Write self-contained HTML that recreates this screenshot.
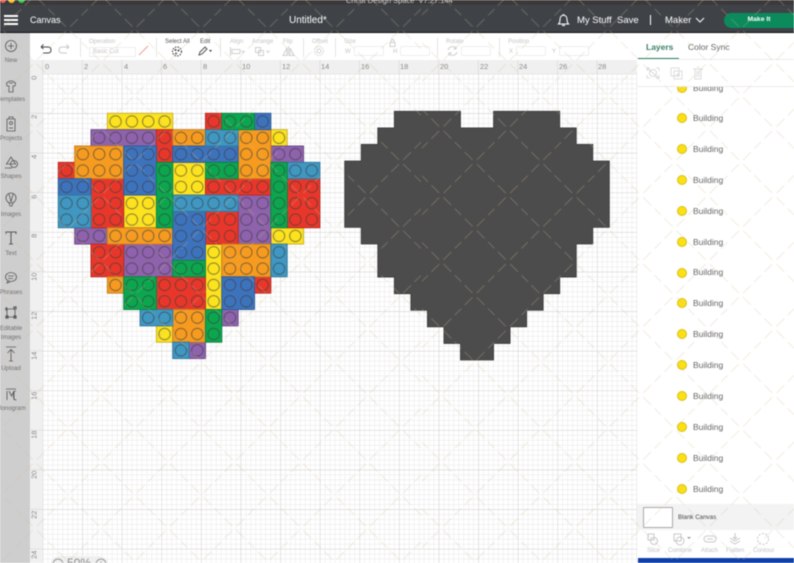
<!DOCTYPE html>
<html><head><meta charset="utf-8"><style>
html,body{margin:0;padding:0;width:794px;height:563px;overflow:hidden;background:#fff}
body{position:relative;font-family:"Liberation Sans",sans-serif}
#w{position:absolute;left:0;top:0;width:794px;height:563px;overflow:hidden;filter:blur(.4px)}
.a{position:absolute;white-space:nowrap;line-height:1}
.sl{position:absolute;left:-9px;width:40px;text-align:center;font-size:6.2px;color:#707070;line-height:1;white-space:nowrap}
.tl{position:absolute;font-size:6px;color:#c4c4c4;line-height:1;white-space:nowrap}
.inp{position:absolute;height:8px;border:1px solid #eee;border-radius:2px;top:46px}
.div{position:absolute;top:38px;width:1px;height:19px;background:#e4e4e4}
.rx{position:absolute;top:63px;font-size:7.5px;color:#8a8a8a;line-height:1}
.ry{position:absolute;left:28px;width:12px;text-align:center;font-size:7.5px;color:#8a8a8a;line-height:1;transform:rotate(-90deg)}
.row{position:absolute;left:677px;width:10px;height:10px;border-radius:50%;background:#fbe013;border:.5px solid #d9bf18;box-sizing:border-box}
.rt{position:absolute;left:693px;font-size:8.5px;color:#666;line-height:1}
.bt{position:absolute;top:548px;font-size:6px;color:#c2c2c2;line-height:1;white-space:nowrap}
svg{position:absolute;overflow:visible}
</style></head><body><div id="w">

<!-- title bar -->
<div class="a" style="left:0;top:0;width:794px;height:5px;background:#3b393a"></div>
<div class="a" style="left:0;top:-3px;width:6px;height:6px;border-radius:50%;background:#ee5f57"></div>
<div class="a" style="left:8px;top:-4px;width:7px;height:7px;border-radius:50%;background:#f6bd2e"></div>
<div class="a" style="left:18px;top:-4px;width:7px;height:7px;border-radius:50%;background:#3fc74b"></div>
<div class="a" style="left:346px;top:-3px;font-size:7.5px;color:#cfcfcf">Cricut Design Space&nbsp; V7.27.144</div>

<!-- header -->
<div class="a" style="left:0;top:5px;width:794px;height:27px;background:#3f4348"></div>
<div class="a" style="left:0;top:32px;width:794px;height:1px;background:#0c0c0c"></div>
<div class="a" style="left:4px;top:15px;width:14px;height:2px;background:#fff"></div>
<div class="a" style="left:4px;top:19px;width:14px;height:2px;background:#fff"></div>
<div class="a" style="left:4px;top:23px;width:14px;height:2px;background:#fff"></div>
<div class="a" style="left:30px;top:16px;font-size:9px;color:#fff">Canvas</div>
<div class="a" style="left:289px;top:16px;font-size:10px;color:#fff">Untitled*</div>
<svg style="left:557px;top:13px" width="13" height="14" viewBox="0 0 13 14" fill="none" stroke="#fff" stroke-width="1.1"><path d="M1.5 11h10c-1.2-1.2-1.5-2-1.5-4.500C10 4 8.600 2.200 6.500 2.200S3 4 3 6.500C3 9 2.700 9.800 1.500 11zM5 12.400h3M6.500 1v1.200"/></svg>
<div class="a" style="left:577px;top:16px;font-size:9.5px;color:#fff">My Stuff</div>
<div class="a" style="left:617px;top:16px;font-size:9.5px;color:#fff">Save</div>
<div class="a" style="left:650px;top:15px;width:1px;height:10px;background:#fff"></div>
<div class="a" style="left:665px;top:16px;font-size:9.5px;color:#fff">Maker</div>
<svg style="left:695px;top:17px" width="10" height="6" viewBox="0 0 10 6" fill="none" stroke="#fff" stroke-width="1"><path d="M1 1l4 4 4-4"/></svg>
<div class="a" style="left:724px;top:12.500px;width:80px;height:15px;border-radius:8px;background:#0b8a5c"></div>
<div class="a" style="left:724px;top:17px;width:70px;text-align:center;font-size:6.800px;font-weight:bold;color:#fff">Make It</div>

<!-- toolbar -->
<div class="a" style="left:30px;top:33px;width:607px;height:27px;background:#fff"></div>
<svg style="left:39px;top:43px" width="32" height="11" viewBox="0 0 32 11" fill="none" stroke-width="1"><path stroke="#444" d="M2 4h7c2 0 3 1.200 3 3s-1 3-3 3H4M2 4l2.500-2.500M2 4l2.500 2"/><path stroke="#c8c8c8" d="M30 4h-7c-2 0-3 1.200-3 3s1 3 3 3h5M30 4l-2.500-2.500M30 4l-2.500 2"/></svg>
<div class="div" style="left:80px"></div>
<div class="tl" style="left:89px;top:39px">Operation</div>
<div class="a" style="left:89px;top:47px;width:45px;height:8px;border:1px solid #eee"></div>
<div class="tl" style="left:93px;top:49px">Basic Cut</div>
<svg style="left:138px;top:45px" width="12" height="11"><path d="M1 10L10 1" stroke="#f0a79f" stroke-width="1.2"/></svg>
<div class="div" style="left:156px"></div>
<div class="a" style="left:165px;top:39px;font-size:6px;color:#555">Select All</div>
<svg style="left:171px;top:46px" width="12" height="11" fill="none"><circle cx="6" cy="5.500" r="4.500" stroke="#333" stroke-dasharray="1.500 1.200"/><circle cx="4.500" cy="4" r="1" fill="#444"/><circle cx="7.500" cy="4.500" r="1" fill="#444"/><circle cx="5" cy="7.500" r="1" fill="#444"/></svg>
<div class="a" style="left:200px;top:39px;font-size:6px;color:#555">Edit</div>
<svg style="left:197px;top:46px" width="16" height="10" fill="none"><path d="M2 9l1-3 5-5 2 2-5 5z" stroke="#444" stroke-width=".9"/><path d="M12 4h3l-1.500 2z" fill="#333"/></svg>
<div class="div" style="left:220px"></div>
<div class="tl" style="left:230px;top:39px">Align</div>
<svg style="left:230px;top:47px" width="15" height="9" fill="none" stroke="#cfcfcf"><path d="M.5 0v9M2 2.500h8v4H2z"/><path d="M11.500 3.500l1.500 2 1.500-2"/></svg>
<div class="tl" style="left:252px;top:39px">Arrange</div>
<svg style="left:255px;top:47px" width="15" height="9" fill="none" stroke="#cfcfcf"><path d="M.5.500h5v5h-5zM3.500 3.500h5v5h-5z"/><path d="M11.500 3.500l1.500 2 1.500-2"/></svg>
<div class="tl" style="left:283px;top:39px">Flip</div>
<svg style="left:282px;top:46px" width="15" height="10" fill="none" stroke="#cfcfcf"><path d="M6.500 0v10M5 2L1 9.500h4zM8 2l4 7.500H8z"/></svg>
<div class="div" style="left:303px"></div>
<div class="tl" style="left:312px;top:39px">Offset</div>
<svg style="left:314px;top:46px" width="10" height="10" fill="none" stroke="#d2d2d2"><circle cx="5" cy="5" r="2"/><circle cx="5" cy="5" r="4.500" stroke-dasharray="1.500 1"/></svg>
<div class="div" style="left:335px"></div>
<div class="tl" style="left:344px;top:39px">Size</div>
<svg style="left:389px;top:39px" width="7" height="8" fill="none" stroke="#cfcfcf"><path d="M1 3.500h5v4H1zM2 3.500V2c0-2 3-2 3 0v1.500"/></svg>
<div class="tl" style="left:345px;top:49px">W</div><div class="inp" style="left:354px;width:28px"></div>
<div class="tl" style="left:393px;top:49px">H</div><div class="inp" style="left:400px;width:28px"></div>
<div class="div" style="left:437px"></div>
<div class="tl" style="left:446px;top:39px">Rotate</div>
<svg style="left:447px;top:46px" width="11" height="10" fill="none" stroke="#cfcfcf"><path d="M1 4a4.500 4.500 0 0 1 8-1.500M10 6a4.500 4.500 0 0 1-8 1.500M9 .5v2.500H6.500M2 9.500V7h2.500"/></svg>
<div class="inp" style="left:461px;width:28px"></div>
<div class="div" style="left:499px"></div>
<div class="tl" style="left:508px;top:39px">Position</div>
<div class="tl" style="left:509px;top:49px">X</div><div class="inp" style="left:516px;width:28px"></div>
<div class="tl" style="left:552px;top:49px">Y</div><div class="inp" style="left:559px;width:28px"></div>

<!-- left sidebar -->
<div class="a" style="left:0;top:33px;width:30px;height:530px;background:#cecece"></div>
<svg style="left:0;top:33px" width="30" height="400" fill="none" stroke="#5a5a5a" stroke-width=".85">
<circle cx="11" cy="13" r="5.500"/><path d="M11 10v6M8 13h6"/>
<path d="M6.500 50l3-2h3l3 2-.5 3h-2v6H9v-6H7z"/><path d="M9 50h4"/>
<path d="M7 86h8v12H7zM9 86v-2h4v2"/><circle cx="11" cy="90" r="1.500"/><path d="M9 95h4"/>
<path d="M11 124l4.500 7h-9z"/><circle cx="14" cy="131" r="3.500"/><path d="M5 135h7"/>
<circle cx="11" cy="165" r="5"/><path d="M9 170l1 3h2l1-3M9 161l2 8 2-8"/>
<path d="M6 201v-2h10v2M11 199v12M9 211h4" stroke-width="1.100"/>
<ellipse cx="11" cy="244" rx="5.500" ry="4.500"/><path d="M8 243h6M8 245.500h5M8 248l-1 2 3-1"/>
<path d="M7 276h8v8H7z"/><path d="M5 276h3M6.500 274v4M14 274h2v2h-2zM6 283h2v2H6zM14 283h2v2h-2z" stroke-width="1.200"/>
<path d="M6 314h10M11 328v-11M7.500 320l3.500-3.500 3.500 3.500M9 328h4"/>
<path d="M6 356h10M7 358v9M9 358l2.500 5 2.500-5v9M16 358c-2 0-2.500 1-2.500 3v3c0 2 1 3 3 3"/>
</svg>
<div class="sl" style="top:58px">New</div>
<div class="sl" style="top:97px">Templates</div>
<div class="sl" style="top:136px">Projects</div>
<div class="sl" style="top:174px">Shapes</div>
<div class="sl" style="top:212px">Images</div>
<div class="sl" style="top:251px">Text</div>
<div class="sl" style="top:290px">Phrases</div>
<div class="sl" style="top:326px">Editable</div>
<div class="sl" style="top:335px">Images</div>
<div class="sl" style="top:366px">Upload</div>
<div class="sl" style="top:406px">Monogram</div>

<!-- canvas and grid -->
<svg style="left:30px;top:60px" width="607" height="503" viewBox="30 60 607 503">
<defs>
<pattern id="gm" x="42.7" y="73.7" width="4.95" height="4.95" patternUnits="userSpaceOnUse"><path d="M0 0H4.950M0 0V4.950" stroke="#e6e6e6" stroke-width=".9" fill="none"/></pattern>
<pattern id="gM" x="42.7" y="73.7" width="39.6" height="39.6" patternUnits="userSpaceOnUse"><path d="M0 0H39.600M0 0V39.600" stroke="#d2d2d2" stroke-width="1" fill="none"/></pattern>
<pattern id="st" x="0" y="0" width="1" height="1" patternUnits="userSpaceOnUse"><circle cx=".5" cy=".5" r=".35" fill="none" stroke="#3a3a3a" stroke-opacity=".62" stroke-width=".06"/></pattern>
<polygon id="hp" points="3,0 7,0 7,1 9,1 9,0 13,0 13,1 14,1 14,2 15,2 15,3 16,3 16,7 15,7 15,8 14,8 14,10 13,10 13,11 12,11 12,12 11,12 11,13 10,13 10,14 9,14 9,15 7,15 7,14 6,14 6,13 5,13 5,12 4,12 4,11 3,11 3,10 2,10 2,8 1,8 1,7 0,7 0,3 1,3 1,2 2,2 2,1 3,1"/>
</defs>
<rect x="30" y="60" width="607" height="503" fill="#f0f0f0"/>
<rect x="42.700" y="73.700" width="594.300" height="489.300" fill="#fff"/>
<rect x="42.700" y="73.700" width="594.300" height="489.300" fill="url(#gm)"/>
<rect x="42.700" y="73.700" width="594.300" height="489.300" fill="url(#gM)"/>
<path d="M82.300 60v14M121.900 60v14M161.500 60v14M201.100 60v14M240.700 60v14M280.300 60v14M319.900 60v14M359.500 60v14M399.100 60v14M438.700 60v14M478.300 60v14M517.900 60v14M557.500 60v14M597.100 60v14M42.700 60v14M30 113.300h13M30 152.900h13M30 192.500h13M30 232.100h13M30 271.700h13M30 311.300h13M30 350.900h13M30 390.500h13M30 430.100h13M30 469.700h13M30 509.300h13M30 548.900h13" stroke="#dcdcdc" stroke-width=".8" fill="none"/>

<g transform="translate(58.3 113.3) scale(16.35)" stroke-width=".06">
<g fill="#fde31e" stroke="#c9b22a"><rect x="3" y="0" width="4" height="1"/><rect x="13" y="1" width="1" height="1"/><rect x="7" y="3" width="2" height="2"/><rect x="4" y="5" width="2" height="2"/><rect x="13" y="7" width="2" height="1"/><rect x="9" y="8" width="1" height="4"/><rect x="6" y="13" width="1" height="1"/></g>
<g fill="#8e62ac" stroke="#6f4d8a"><rect x="2" y="1" width="4" height="1"/><rect x="13" y="2" width="2" height="1"/><rect x="11" y="5" width="2" height="3"/><rect x="1" y="7" width="2" height="1"/><rect x="4" y="8" width="3" height="2"/><rect x="10" y="12" width="1" height="1"/><rect x="8" y="14" width="1" height="1"/></g>
<g fill="#e8372a" stroke="#b52c24"><rect x="6" y="1" width="1" height="2"/><rect x="9" y="0" width="1" height="1"/><rect x="0" y="3" width="1" height="1"/><rect x="9" y="4" width="4" height="1"/><rect x="2" y="4" width="2" height="3"/><rect x="14" y="4" width="2" height="3"/><rect x="9" y="6" width="2" height="2"/><rect x="2" y="8" width="2" height="2"/><rect x="6" y="10" width="3" height="2"/><rect x="12" y="10" width="1" height="1"/></g>
<g fill="#f69b1f" stroke="#c57e22"><rect x="7" y="1" width="2" height="1"/><rect x="11" y="1" width="2" height="3"/><rect x="1" y="2" width="3" height="2"/><rect x="3" y="7" width="4" height="1"/><rect x="10" y="8" width="3" height="2"/><rect x="3" y="10" width="1" height="1"/><rect x="7" y="12" width="2" height="2"/></g>
<g fill="#3d73bd" stroke="#2f5b97"><rect x="12" y="0" width="1" height="1"/><rect x="7" y="2" width="4" height="1"/><rect x="4" y="2" width="2" height="3"/><rect x="0" y="4" width="2" height="1"/><rect x="7" y="6" width="2" height="3"/><rect x="10" y="10" width="2" height="2"/></g>
<g fill="#3f97c2" stroke="#32799b"><rect x="9" y="1" width="2" height="1"/><rect x="14" y="3" width="2" height="1"/><rect x="0" y="5" width="2" height="2"/><rect x="7" y="5" width="4" height="1"/><rect x="13" y="8" width="1" height="2"/><rect x="5" y="12" width="2" height="1"/><rect x="7" y="14" width="1" height="1"/></g>
<g fill="#0ca64f" stroke="#0f8443"><rect x="10" y="0" width="2" height="1"/><rect x="6" y="3" width="1" height="4"/><rect x="9" y="3" width="2" height="1"/><rect x="13" y="3" width="1" height="4"/><rect x="7" y="9" width="2" height="1"/><rect x="4" y="10" width="2" height="2"/><rect x="9" y="12" width="1" height="2"/></g>
<use href="#hp" fill="url(#st)"/>
</g>

<g transform="translate(344.7 111.3) scale(16.54 16.58)">
<use href="#hp" fill="#4c4c4c" stroke="#3a3a3a" stroke-width=".05"/>
</g>
</svg>

<div class="rx" style="left:45px">0</div><div class="rx" style="left:84px">2</div><div class="rx" style="left:124px">4</div><div class="rx" style="left:163px">6</div><div class="rx" style="left:203px">8</div><div class="rx" style="left:242px">10</div><div class="rx" style="left:282px">12</div><div class="rx" style="left:321px">14</div><div class="rx" style="left:361px">16</div><div class="rx" style="left:400px">18</div><div class="rx" style="left:440px">20</div><div class="rx" style="left:480px">22</div><div class="rx" style="left:519px">24</div><div class="rx" style="left:559px">26</div><div class="rx" style="left:598px">28</div>
<div class="ry" style="top:74px">0</div><div class="ry" style="top:113px">2</div><div class="ry" style="top:153px">4</div><div class="ry" style="top:193px">6</div><div class="ry" style="top:232px">8</div><div class="ry" style="top:273px">10</div><div class="ry" style="top:312px">12</div><div class="ry" style="top:352px">14</div><div class="ry" style="top:392px">16</div><div class="ry" style="top:431px">18</div><div class="ry" style="top:471px">20</div><div class="ry" style="top:511px">22</div><div class="ry" style="top:551px">24</div>

<!-- zoom control -->
<div class="a" style="left:50px;top:556px;width:59px;height:20px;border-radius:10px;background:#efefef"></div>
<svg style="left:51px;top:557px" width="58" height="14" fill="none" stroke="#9a9a9a"><circle cx="7" cy="7" r="5"/><path d="M4.500 7h5"/><circle cx="50" cy="7" r="5"/><path d="M47.500 7h5M50 4.500v5"/></svg>
<div class="a" style="left:67px;top:557px;font-size:12px;color:#8a8a8a">50%</div>

<!-- right panel -->
<div class="a" style="left:637px;top:33px;width:157px;height:530px;background:#fff"></div>
<div class="a" style="left:646px;top:43px;font-size:8.500px;font-weight:bold;color:#3b8068">Layers</div>
<div class="a" style="left:688px;top:43px;font-size:8.500px;color:#666">Color Sync</div>
<div class="a" style="left:638px;top:58px;width:41px;height:1px;background:#1f7a58"></div>
<div class="a" style="left:679px;top:59px;width:115px;height:1px;background:#ececec"></div>
<svg style="left:645px;top:66px" width="64" height="14" fill="none" stroke="#dcdcdc"><circle cx="8" cy="7" r="3.500"/><path d="M2 2l12 10M2 5V2h3M11 2h3v3M2 9v3h3M11 12h3V9"/><path d="M26 2h8v8h-8zM29 5h8v8h-8zM33 7v4M31 9h4"/><path d="M48 3h10M50 3v10h6V3M52 1h2M52 5v6M54 5v6"/></svg>
<div class="a" style="left:637px;top:86px;width:157px;height:1px;background:#ececec"></div>
<div style="position:absolute;left:637px;top:87px;width:157px;height:416px;overflow:hidden">
<div class="row" style="left:40px;top:-4px"></div><div class="rt" style="left:56px;top:-3px">Building</div>
</div>
<div class="row" style="top:113px"></div><div class="rt" style="top:114px">Building</div>
<div class="row" style="top:144px"></div><div class="rt" style="top:145px">Building</div>
<div class="row" style="top:175px"></div><div class="rt" style="top:176px">Building</div>
<div class="row" style="top:206px"></div><div class="rt" style="top:207px">Building</div>
<div class="row" style="top:237px"></div><div class="rt" style="top:238px">Building</div>
<div class="row" style="top:268px"></div><div class="rt" style="top:268px">Building</div>
<div class="row" style="top:298px"></div><div class="rt" style="top:299px">Building</div>
<div class="row" style="top:329px"></div><div class="rt" style="top:330px">Building</div>
<div class="row" style="top:360px"></div><div class="rt" style="top:361px">Building</div>
<div class="row" style="top:391px"></div><div class="rt" style="top:392px">Building</div>
<div class="row" style="top:422px"></div><div class="rt" style="top:423px">Building</div>
<div class="row" style="top:453px"></div><div class="rt" style="top:454px">Building</div>
<div class="row" style="top:484px"></div><div class="rt" style="top:485px">Building</div>

<div class="a" style="left:637px;top:504px;width:157px;height:26px;background:#f3f3f3"></div>
<div class="a" style="left:643px;top:507px;width:28px;height:19px;background:#fff;border:1px solid #a8a8a8;border-radius:1px"></div>
<div class="a" style="left:678px;top:515px;font-size:6.200px;color:#444">Blank Canvas</div>
<svg style="left:645px;top:532px" width="130" height="14" fill="none" stroke="#c8c8c8"><path d="M3 2h6v6H3z"/><circle cx="9" cy="9" r="3.500"/><path d="M29 2h7v7h-7z"/><circle cx="35" cy="9" r="4"/><path d="M42 5h4l-2 2z" fill="#999" stroke="none"/><rect x="59" y="4" width="12" height="6" rx="3"/><path d="M62 7h6"/><path d="M90 1v6M88 5l2 2 2-2M85 6l5 3 5-3M85 9l5 3 5-3"/><circle cx="118" cy="7" r="5.500" stroke-dasharray="2 1.500"/></svg>
<div class="bt" style="left:647px">Slice</div>
<div class="bt" style="left:668px">Combine</div>
<div class="bt" style="left:701px">Attach</div>
<div class="bt" style="left:726px">Flatten</div>
<div class="bt" style="left:753px">Contour</div>
<div class="a" style="left:638px;top:558px;width:156px;height:5px;background:#0f3fa8"></div>

<!-- watermark overlay -->
<svg style="left:0;top:0;pointer-events:none" width="794" height="563">
<defs>
<pattern id="wa" patternUnits="userSpaceOnUse" width="66.6" height="66.6" patternTransform="translate(34.8 62.1)"><path d="M0 0L66.6 66.6M0 66.6L66.6 0" stroke="#d2be8e" stroke-width="1" stroke-dasharray="0 3 11 5 9 5 11 3" fill="none"/></pattern>
<pattern id="wb" patternUnits="userSpaceOnUse" width="66.6" height="66.6" patternTransform="translate(41.8 62.1)"><path d="M0 0L66.6 66.6M0 66.6L66.6 0" stroke="#d2be8e" stroke-width="1" stroke-dasharray="0 3 11 5 9 5 11 3" fill="none"/></pattern>
</defs>
<rect x="0" y="0" width="422" height="563" fill="url(#wa)" opacity=".3"/>
<rect x="422" y="0" width="372" height="563" fill="url(#wb)" opacity=".3"/>
</svg>
</div></body></html>
